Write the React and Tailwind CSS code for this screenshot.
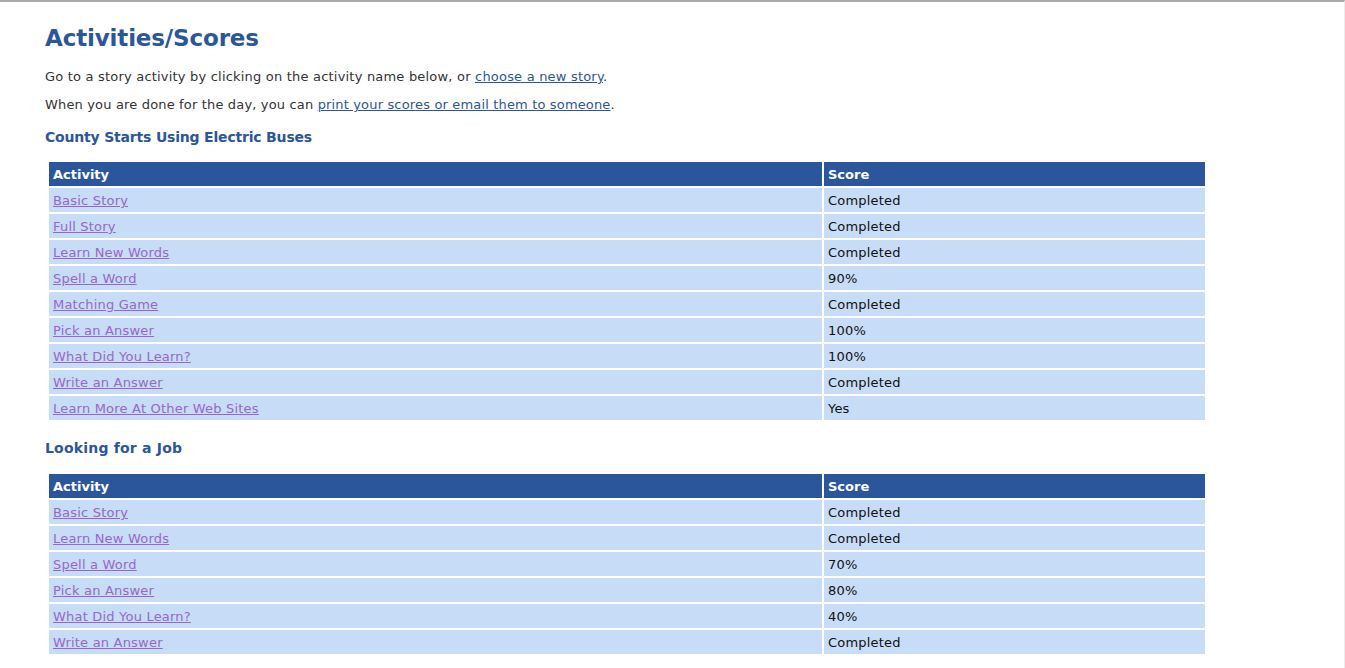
import React from "react";

const story1 = [
  ["Basic Story", "Completed"],
  ["Full Story", "Completed"],
  ["Learn New Words", "Completed"],
  ["Spell a Word", "90%"],
  ["Matching Game", "Completed"],
  ["Pick an Answer", "100%"],
  ["What Did You Learn?", "100%"],
  ["Write an Answer", "Completed"],
  ["Learn More At Other Web Sites", "Yes"],
];

const story2 = [
  ["Basic Story", "Completed"],
  ["Learn New Words", "Completed"],
  ["Spell a Word", "70%"],
  ["Pick an Answer", "80%"],
  ["What Did You Learn?", "40%"],
  ["Write an Answer", "Completed"],
];

function ScoreTable({ rows }) {
  return (
    <table className="ml-[2px] w-[1160px] border-separate border-spacing-[2px] text-[13px] leading-[16px] tracking-[0.2px]">
      <thead>
        <tr>
          <th className="h-[24px] w-[773px] bg-[#2c569c] px-[4px] pt-[2px] pb-0 text-left font-bold text-white tracking-[0px]">Activity</th>
          <th className="h-[24px] w-[381px] bg-[#2c569c] px-[4px] pt-[2px] pb-0 text-left font-bold text-white tracking-[0px]">Score</th>
        </tr>
      </thead>
      <tbody>
        {rows.map(([a, s], i) => (
          <tr key={i}>
            <td className="h-[24px] bg-[#c6dcf7] px-[4px] pt-[2px] pb-0">
              <a href="#" className="text-[#9966cc] underline">{a}</a>
            </td>
            <td className="h-[24px] bg-[#c6dcf7] px-[4px] pt-[2px] pb-0 text-[#111111]">{s}</td>
          </tr>
        ))}
      </tbody>
    </table>
  );
}

export default function App() {
  return (
    <div
      className="min-h-screen border-t-2 border-r border-t-[#a9a9a9] border-r-[#ececec] bg-white text-[#333333]"
      style={{ fontFamily: '"DejaVu Sans", Verdana, sans-serif' }}
    >
      <div className="pl-[45px]">
        <h1 className="pt-[21px] text-[23px] font-bold leading-[30px] tracking-[-0.15px] text-[#2b569a]">Activities/Scores</h1>
        <p className="mt-[15px] text-[13px] leading-[18px] tracking-[0.2px]">
          Go to a story activity by clicking on the activity name below, or{" "}
          <a href="#" className="text-[#2b569a] underline">choose a new story</a>.
        </p>
        <p className="mt-[10px] text-[13px] leading-[18px] tracking-[0.16px]">
          When you are done for the day, you can{" "}
          <a href="#" className="text-[#2b569a] underline">print your scores or email them to someone</a>.
        </p>
        <h3 className="mt-[13px] text-[14px] font-bold leading-[20px] tracking-[-0.19px] text-[#2b569a]">County Starts Using Electric Buses</h3>
        <div className="mt-[13px]">
          <ScoreTable rows={story1} />
        </div>
        <h3 className="mt-[16px] text-[14px] font-bold leading-[20px] tracking-[0.2px] text-[#2b569a]">Looking for a Job</h3>
        <div className="mt-[14px]">
          <ScoreTable rows={story2} />
        </div>
      </div>
    </div>
  );
}
